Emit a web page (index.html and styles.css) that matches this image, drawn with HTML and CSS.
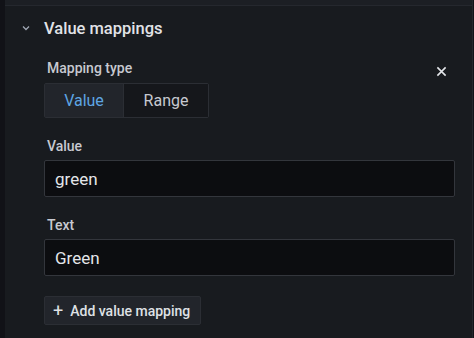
FILE: index.html
```html
<!DOCTYPE html>
<html lang="en">
<head>
  <meta charset="UTF-8">
  <title>Value mappings</title>
  <link rel="stylesheet" href="styles.css">
</head>
<body>
  <div class="frame">
    <div class="topbar"></div>
    <div class="panel">
      <div class="section-head">
        <svg class="chevron" width="10" height="10" viewBox="0 0 10 10"><path d="M2 3.5 L5 6.5 L8 3.5" fill="none" stroke="#9fa7b3" stroke-width="1.3"/></svg>
        <span class="section-title">Value mappings</span>
      </div>

      <div class="mapping">
        <div class="mapping-head">
          <div class="field-label">Mapping type</div>
          <button class="icon-btn" type="button" aria-label="Remove">
            <svg width="11" height="11" viewBox="0 0 12 12"><path d="M1.5 1.5 L10.5 10.5 M10.5 1.5 L1.5 10.5" stroke="#e4e6ea" stroke-width="1.7"/></svg>
          </button>
        </div>
        <div class="radio-group">
          <div class="radio active">Value</div>
          <div class="radio">Range</div>
        </div>

        <div class="field">
          <div class="field-label">Value</div>
          <div class="input">green</div>
        </div>

        <div class="field">
          <div class="field-label">Text</div>
          <div class="input">Green</div>
        </div>

        <button class="add-btn" type="button"><span class="plus">+</span>Add value mapping</button>
      </div>
    </div>
  </div>
</body>
</html>
```

FILE: styles.css
```css
html, body {
  margin: 0;
  height: 100%;
  background: #111217;
}
body {
  font-family: Roboto, "Noto Sans", sans-serif;
  color: #d8d9de;
}
.frame {
  height: 100%;
  margin-left: 5px;
  margin-right: 1px;
  border-right: 1px solid #24272d;
  background: #181b1f;
  display: flex;
  flex-direction: column;
}
.topbar {
  height: 5px;
  background: #1c1f24;
  border-bottom: 1px solid #25282e;
}
.panel {
  flex: 1;
  padding: 0 17px 0 0;
}
.section-head {
  display: flex;
  align-items: center;
  height: 44px;
  padding-left: 16px;
}
.chevron {
  margin-right: 13px;
}
.section-title {
  font-size: 16.5px;
  font-weight: 500;
  color: #e1e3e7;
}
.mapping {
  padding-left: 39px;
}
.mapping-head {
  display: flex;
  justify-content: space-between;
  align-items: center;
  height: 30px;
  padding-top: 3px;
}
.mapping-head .field-label {
  margin: 0 0 0 3px;
}
.field-label {
  font-size: 14px;
  line-height: 17px;
  font-weight: 500;
  color: #c7c9d0;
  margin: 0 0 5px 3px;
}
.icon-btn {
  width: 28px;
  height: 28px;
  margin-top: 7px;
  padding: 0;
  border: none;
  background: none;
  display: flex;
  align-items: center;
  justify-content: center;
}
.radio-group {
  display: inline-flex;
  border: 1px solid #2b2e34;
  border-radius: 2px;
  height: 33px;
  margin-bottom: 20px;
}
.radio {
  display: flex;
  align-items: center;
  justify-content: center;
  font-size: 16px;
  color: #c7c9d0;
  background: #15171b;
}
.radio:first-child {
  width: 78px;
  border-right: 1px solid #2b2e34;
}
.radio:last-child {
  width: 84px;
}
.radio.active {
  background: #22252b;
  color: #5ea5e3;
}
.field {
  margin-bottom: 20px;
}
.input {
  height: 35px;
  border: 1px solid #33363c;
  border-radius: 2px;
  background: #0c0d10;
  display: flex;
  align-items: center;
  padding-left: 10px;
  font-size: 17px;
  color: #e4e6ea;
}
.add-btn {
  display: inline-flex;
  align-items: center;
  height: 29px;
  padding: 0 10px 0 8px;
  border: 1px solid #2b2e34;
  border-radius: 2px;
  background: #22252b;
  color: #dfe1e5;
  font-family: inherit;
  font-size: 14px;
  font-weight: 500;
}
.plus {
  font-size: 18px;
  font-weight: 400;
  margin-right: 7px;
  line-height: 1;
}
```
